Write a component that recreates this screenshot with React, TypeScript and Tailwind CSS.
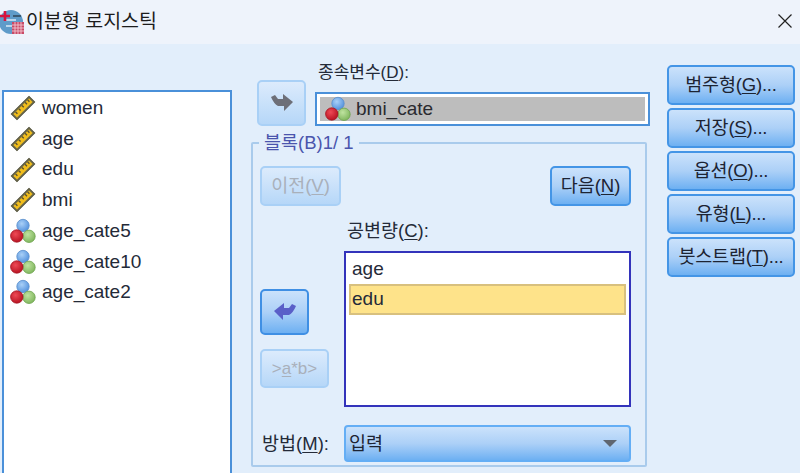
import React from 'react';

const FONT = "font-['Liberation_Sans','Noto_Sans_CJK_KR',sans-serif]";

const activeBtn = 'bg-gradient-to-b from-[#cbe2fb] via-[#acd0f7] to-[#6db0f2] border-2 border-[#4495e6] rounded-[5px] text-[#1d2433]';
const disabledBtn = 'bg-gradient-to-b from-[#dcebfc] to-[#b6d7f8] border-2 border-[#a9d0f6] rounded-[5px] text-[#a9b0ba]';

function Ruler() {
  return (
    <svg width="26" height="26" viewBox="0 0 26 26" className="shrink-0">
      <g transform="rotate(-45 13 13)">
        <rect x="0.5" y="9" width="25" height="8" fill="#6f6d4a" stroke="#55543f" strokeWidth="1" />
        <rect x="2" y="10.5" width="22" height="5" fill="#f1bd1c" />
        <path d="M5 10.5v2.6M9.5 10.5v2.6M14 10.5v2.6M18.5 10.5v2.6M22 10.5v2.6" stroke="#5b5230" strokeWidth="1.4" />
      </g>
    </svg>
  );
}

function Nominal() {
  return (
    <svg width="26" height="26" viewBox="0 0 26 26" className="shrink-0">
      <defs>
        <radialGradient id="nb" cx="40%" cy="35%" r="70%">
          <stop offset="0%" stopColor="#a9d0f7" />
          <stop offset="100%" stopColor="#4f8fdc" />
        </radialGradient>
        <radialGradient id="nr" cx="40%" cy="35%" r="70%">
          <stop offset="0%" stopColor="#ee4a55" />
          <stop offset="100%" stopColor="#b5101f" />
        </radialGradient>
        <radialGradient id="ng" cx="40%" cy="35%" r="70%">
          <stop offset="0%" stopColor="#bfe3a0" />
          <stop offset="100%" stopColor="#7db45a" />
        </radialGradient>
      </defs>
      <circle cx="13" cy="7.5" r="6.2" fill="url(#nb)" stroke="#5a8fcb" strokeWidth="0.8" />
      <circle cx="19" cy="18.3" r="6.2" fill="url(#ng)" stroke="#6fa34f" strokeWidth="0.8" />
      <circle cx="6.8" cy="18" r="6.2" fill="url(#nr)" stroke="#a31523" strokeWidth="0.8" />
    </svg>
  );
}

function TitleIcon() {
  return (
    <svg width="25" height="26" viewBox="0 0 25 26" className="shrink-0">
      <circle cx="11" cy="13" r="12" fill="#5f9bc9" />
      <path d="M4 11h12M6 17h8" stroke="#b9d6ec" strokeWidth="2" />
      <rect x="12" y="13" width="12" height="12" fill="#c94a66" />
      <path d="M12 16h12M12 19h12M12 22h12M15 13v12M18 13v12M21 13v12" stroke="#f2c6d0" strokeWidth="0.9" />
      <path d="M5 2v10M0 7h10" stroke="#d8123c" strokeWidth="2.6" />
      <path d="M13 7h8" stroke="#33495e" strokeWidth="1.6" />
    </svg>
  );
}

function BentArrow({ color, flip }: { color: string; flip?: boolean }) {
  return (
    <svg width="22" height="18" viewBox="0 0 22 18" style={flip ? { transform: 'scaleX(-1)' } : undefined}>
      <path d="M0 3L4 1L7 5L12 5L12 0L22 8L13 17L13 12L7 12Q3 10 0 3z" fill={color} />
    </svg>
  );
}

function U({ children }: { children: React.ReactNode }) {
  return <span className="underline underline-offset-2">{children}</span>;
}

function VarRow({ name, kind }: { name: string; kind: 'scale' | 'nominal' }) {
  return (
    <div className="flex h-[30.7px] items-center gap-[6px] pl-[6px]">
      {kind === 'scale' ? <Ruler /> : <Nominal />}
      <span>{name}</span>
    </div>
  );
}

function SideButton({ label, k }: { label: string; k: string }) {
  return (
    <button className={`${activeBtn} h-[40px] w-full flex items-center justify-center text-[18.5px] tracking-[-0.2px]`}>
      {label}(<U>{k}</U>)...
    </button>
  );
}

export default function App() {
  return (
    <div className={`${FONT} w-[800px] h-[473px] overflow-hidden bg-[#e2eefb] text-[19px] text-[#242a38]`}>
      {/* title bar */}
      <div className="h-[44px] bg-[#eef3fb] flex items-center justify-between">
        <div className="flex items-center gap-[1px] pb-[1px]">
          <TitleIcon />
          <span className="text-[19.5px] text-[#1c1c1c]">이분형 로지스틱</span>
        </div>
        <svg width="16" height="16" viewBox="0 0 16 16" className="mr-[7px] mb-[3px]">
          <path d="M1.5 1.5l13 13M14.5 1.5l-13 13" stroke="#222" strokeWidth="1.2" />
        </svg>
      </div>

      <div className="flex h-[429px]">
        {/* variable list */}
        <div className="ml-[2px] mt-[46px] w-[230px] h-[400px] shrink-0 bg-white border-2 border-[#4a90d9] pt-[1px]">
          <VarRow name="women" kind="scale" />
          <VarRow name="age" kind="scale" />
          <VarRow name="edu" kind="scale" />
          <VarRow name="bmi" kind="scale" />
          <VarRow name="age_cate5" kind="nominal" />
          <VarRow name="age_cate10" kind="nominal" />
          <VarRow name="age_cate2" kind="nominal" />
        </div>

        {/* center column */}
        <div className="ml-[19px] w-[396px] shrink-0">
          <div className="flex items-end h-[82px]">
            <button className={`${disabledBtn} shrink-0 ml-[6px] w-[49px] h-[46px] flex items-center justify-center`}>
              <BentArrow color="#6d6f78" />
            </button>
            <div className="ml-[9px] shrink-0">
              <div className="h-[20px] mb-[9px] pl-[3px] leading-[20px] text-[17px]">
                종속변수(<U>D</U>):
              </div>
              <div className="w-[335px] h-[34px] border-2 border-[#4a90d9] bg-white p-[3px]">
                <div className="h-full bg-[#bdbdbd] flex items-center gap-[5px] pl-[5px]">
                  <Nominal />
                  <span className="text-[#2a2a30]">bmi_cate</span>
                </div>
              </div>
            </div>
          </div>

          {/* block group */}
          <div className="relative mt-[16px] h-[325px] border-2 border-[#a9cbec] rounded-[2px] px-[7px] pt-[22px]">
            <span className="absolute -top-[11px] left-[6px] h-[20px] px-[5px] bg-[#e2eefb] text-[18.5px] leading-[20px] text-[#4a55ad]">
              블록(B)1/ 1
            </span>

            <div className="flex justify-between w-[371px]">
              <button className={`${disabledBtn} w-[81px] h-[40px] text-[18.5px]`}>
                이전(<U>V</U>)
              </button>
              <button className={`${activeBtn} w-[81px] h-[40px] text-[18.5px]`}>
                다음(<U>N</U>)
              </button>
            </div>

            <div className="flex mt-[15px]">
              <div className="w-[84px] shrink-0 pt-[68px]">
                <button className="bg-gradient-to-b from-[#cbe2fb] via-[#acd0f7] to-[#6db0f2] border-2 border-[#3f8fe4] rounded-[5px] w-[49px] h-[46px] flex items-center justify-center">
                  <BentArrow color="#5a5fc8" flip />
                </button>
                <button className={`${disabledBtn} mt-[14px] w-[69px] h-[39px] text-[17px]`}>
                  &gt;<U>a</U>*b&gt;
                </button>
              </div>
              <div className="w-[287px]">
                <div className="h-[20px] mb-[10px] pl-[3px] leading-[20px] text-[18.5px]">
                  공변량(<U>C</U>):
                </div>
                <div className="h-[156px] border-2 border-[#3333bb] bg-white px-[3px] pt-[1px]">
                  <div className="h-[30px] flex items-center pl-[3px]">age</div>
                  <div className="h-[31px] flex items-center pl-[1px] bg-[#fee38a] border-2 border-[#d8c07e]">edu</div>
                </div>
              </div>
            </div>

            <div className="flex items-center mt-[18px]">
              <div className="w-[84px] pl-[2px] text-[18.5px] whitespace-nowrap">
                방법(<U>M</U>):
              </div>
              <div className="bg-gradient-to-b from-[#cbe2fb] via-[#acd0f7] to-[#6db0f2] border-2 border-[#64aef5] rounded-[4px] text-[#1d2433] w-[287px] h-[37px] flex items-center justify-between pl-[3px] pr-[11px]">
                <span className="text-[18.5px]">입력</span>
                <svg width="16" height="9" viewBox="0 0 16 9">
                  <path d="M1 1h14L8 8z" fill="#5f6670" />
                </svg>
              </div>
            </div>
          </div>
        </div>

        {/* side buttons */}
        <div className="ml-[20px] w-[128px] pt-[21px] flex flex-col gap-[3px]">
          <SideButton label="범주형" k="G" />
          <SideButton label="저장" k="S" />
          <SideButton label="옵션" k="O" />
          <SideButton label="유형" k="L" />
          <SideButton label="붓스트랩" k="T" />
        </div>
      </div>
    </div>
  );
}
